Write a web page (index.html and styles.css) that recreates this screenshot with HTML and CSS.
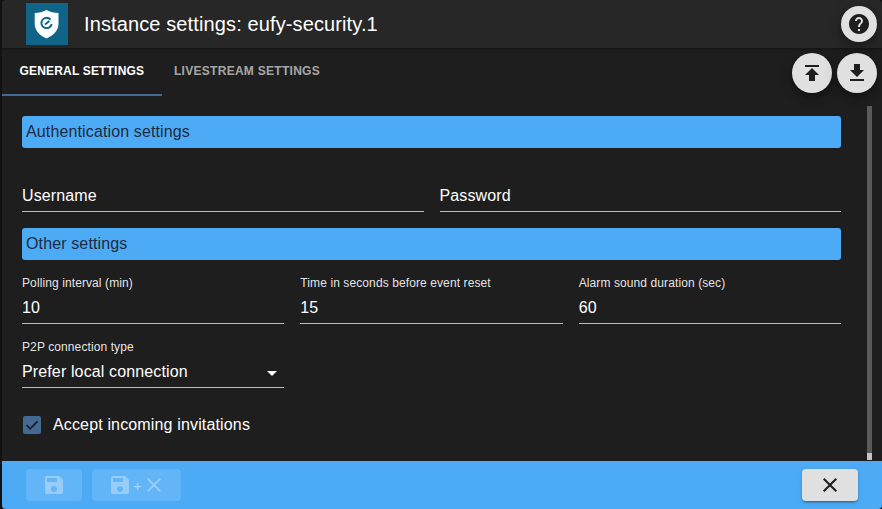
FILE: index.html
```html
<!DOCTYPE html>
<html lang="en">
<head>
<meta charset="utf-8">
<title>Instance settings</title>
<link rel="stylesheet" href="styles.css">
</head>
<body>
<div class="dialog">
  <header class="appbar">
    <div class="logo">
      <svg viewBox="0 0 42 42" width="42" height="42">
        <path d="M20.5 7 C24 9 28 9.8 32.5 10 V20.5 C32.5 28 27 32.5 20.5 35.5 C14 32.5 8.7 28 8.7 20.5 V10 C13 9.8 17 9 20.5 7 Z" fill="#fff"/>
        <path d="M24.6 16.6 A5.2 5.2 0 1 0 25.7 21" fill="none" stroke="#0f6488" stroke-width="1.9"/>
        <path d="M19 21.4 L23.4 18" stroke="#0f6488" stroke-width="1.9"/>
      </svg>
    </div>
    <h1 class="title">Instance settings: eufy-security.1</h1>
    <button class="round round-help" aria-label="Help">
      <svg viewBox="0 0 24 24" width="24" height="24"><path fill="#1e1e1e" d="M12 2C6.48 2 2 6.48 2 12s4.48 10 10 10 10-4.48 10-10S17.52 2 12 2zm1 17h-2v-2h2v2zm2.07-7.75-.9.92C13.45 12.9 13 13.5 13 15h-2v-.5c0-1.1.45-2.1 1.17-2.83l1.24-1.26c.37-.36.59-.86.59-1.41 0-1.1-.9-2-2-2s-2 .9-2 2H8c0-2.21 1.79-4 4-4s4 1.79 4 4c0 .88-.36 1.68-.93 2.25z"/></svg>
    </button>
  </header>
  <nav class="tabs">
    <div class="tab tab-active">General settings</div>
    <div class="tab">Livestream settings</div>
    <div class="tab-actions">
      <button class="round" aria-label="Upload">
        <svg viewBox="0 0 24 24" width="24" height="24"><path fill="#1e1e1e" d="M5 4v2h14V4H5zm0 10h4v6h6v-6h4l-7-7-7 7z"/></svg>
      </button>
      <button class="round" aria-label="Download">
        <svg viewBox="0 0 24 24" width="24" height="24"><path fill="#1e1e1e" d="M19 9h-4V3H9v6H5l7 7 7-7zM5 18v2h14v-2H5z"/></svg>
      </button>
    </div>
  </nav>
  <main class="content">
    <form class="form">
      <div class="section">Authentication settings</div>
      <div class="row row-auth">
        <div class="field field-plain"><span class="value">Username</span></div>
        <div class="field field-plain"><span class="value">Password</span></div>
      </div>
      <div class="section section-other">Other settings</div>
      <div class="row row-three">
        <div class="field"><label class="label">Polling interval (min)</label><span class="value">10</span></div>
        <div class="field"><label class="label">Time in seconds before event reset</label><span class="value">15</span></div>
        <div class="field"><label class="label">Alarm sound duration (sec)</label><span class="value">60</span></div>
      </div>
      <div class="row row-three row-select">
        <div class="field">
          <label class="label">P2P connection type</label>
          <span class="value value-select">Prefer local connection<i class="caret"></i></span>
        </div>
      </div>
      <div class="check-row">
        <span class="checkbox">
          <svg viewBox="0 0 18 18" width="18" height="18"><path d="M3.6 9.2 L7.2 12.8 L14.4 5.4" fill="none" stroke="#1e1e1e" stroke-width="1.8"/></svg>
        </span>
        <span class="check-label">Accept incoming invitations</span>
      </div>
    </form>
    <div class="scrollbar"><div class="scroll-end"></div></div>
  </main>
  <footer class="footer">
    <button class="btn btn-disabled btn-save" aria-label="Save">
      <svg viewBox="0 0 24 24" width="24" height="24"><path fill="#98cdf8" d="M17 3H5c-1.11 0-2 .9-2 2v14c0 1.1.89 2 2 2h14c1.1 0 2-.9 2-2V7l-4-4zm-5 16c-1.66 0-3-1.34-3-3s1.34-3 3-3 3 1.34 3 3-1.34 3-3 3zm3-10H5V5h10v4z"/></svg>
    </button>
    <button class="btn btn-disabled btn-save-close" aria-label="Save and close">
      <svg viewBox="0 0 24 24" width="24" height="24"><path fill="#98cdf8" d="M17 3H5c-1.11 0-2 .9-2 2v14c0 1.1.89 2 2 2h14c1.1 0 2-.9 2-2V7l-4-4zm-5 16c-1.66 0-3-1.34-3-3s1.34-3 3-3 3 1.34 3 3-1.34 3-3 3zm3-10H5V5h10v4z"/></svg>
      <span class="plus">+</span>
      <svg viewBox="0 0 24 24" width="24" height="24"><path fill="#98cdf8" d="M19 6.41 17.59 5 12 10.59 6.41 5 5 6.41 10.59 12 5 17.59 6.41 19 12 13.41 17.59 19 19 17.59 13.41 12z"/></svg>
    </button>
    <button class="btn btn-close" aria-label="Close">
      <svg viewBox="0 0 24 24" width="24" height="24"><path fill="#1e1e1e" d="M19 6.41 17.59 5 12 10.59 6.41 5 5 6.41 10.59 12 5 17.59 6.41 19 12 13.41 17.59 19 19 17.59 13.41 12z"/></svg>
    </button>
  </footer>
</div>
</body>
</html>
```

FILE: styles.css
```css
* { box-sizing: border-box; }
html, body { margin: 0; height: 100%; background: #121212; overflow: hidden; }
body { font-family: "Liberation Sans", Arial, sans-serif; color: #fff; }
.dialog {
  margin-left: 2px;
  height: 509px;
  display: flex;
  flex-direction: column;
  background: #1e1e1e;
  border-radius: 4px;
  overflow: hidden;
}
.appbar {
  height: 48px;
  flex: none;
  display: flex;
  align-items: center;
  background: #272727;
  box-shadow: 0 1px 3px rgba(0,0,0,.35);
  position: relative;
  padding: 3px 5px 3px 24px;
}
.logo { width: 42px; height: 42px; background: #0f6488; }
.logo svg { display: block; }
.title { margin: 0 0 0 16px; font-size: 20px; font-weight: 400; line-height: 32px; letter-spacing: .12px; flex: 1; white-space: nowrap; }
.round {
  width: 40px; height: 40px; border: 0; padding: 0; border-radius: 50%;
  background: #e0e0e0; display: flex; align-items: center; justify-content: center;
  box-shadow: 0 3px 5px -1px rgba(0,0,0,.2), 0 6px 10px 0 rgba(0,0,0,.14), 0 1px 18px 0 rgba(0,0,0,.12);
}
.round-help { width: 36px; height: 36px; }
.tabs { height: 48px; flex: none; display: flex; }
.tab {
  height: 48px; padding: 0 12px; display: flex; align-items: center;
  font-size: 12px; font-weight: 700; text-transform: uppercase; letter-spacing: .28px;
  color: rgba(255,255,255,.62); border-bottom: 2px solid transparent; white-space: nowrap;
  padding-bottom: 1px;
}
.tab-active { color: #fff; border-bottom-color: #436a93; width: 160px; padding-left: 17.5px; letter-spacing: .18px; }
.tab-actions { margin-left: auto; display: flex; gap: 5px; padding: 5px 5px 0 0; }
.content { flex: 1; min-height: 0; display: flex; padding: 20px 0 0 20px; position: relative; }
.form { width: 819px; flex: none; }
.section {
  height: 32px; background: #4dabf5; border-radius: 3px;
  font-size: 16px; line-height: 32px; padding-left: 4px; letter-spacing: .13px;
  color: #1e2a40;
}
.section-other { margin-top: 16px; }
.row { display: grid; gap: 16px; }
.row-auth { grid-template-columns: 1fr 1fr; margin-top: 32px; }
.row-three { grid-template-columns: 1fr 1fr 1fr; margin-top: 16px; }
.row-select { margin-top: 16px; }
.field { border-bottom: 1px solid rgba(255,255,255,.7); }
.field-plain { height: 32px; }
.label { display: block; font-size: 12px; line-height: 14px; letter-spacing: .1px; color: rgba(255,255,255,.9); font-weight: 400; }
.value { display: block; font-size: 16px; line-height: 19px; padding: 8px 0 6px; letter-spacing: .13px; color: #fff; white-space: nowrap; }
.field-plain .value { padding: 0; line-height: 31px; }
.value-select { display: flex; align-items: center; justify-content: space-between; padding: 8px 0 6px; }
.caret { width: 0; height: 0; border: 5px solid transparent; border-top-color: #fff; border-bottom: 0; margin-right: 7px; margin-top: 3px; }
.check-row { display: flex; align-items: center; margin-top: 27px; padding-left: 1px; }
.checkbox { width: 18px; height: 18px; border-radius: 2px; background: #436a93; display: block; }
.checkbox svg { display: block; }
.check-label { margin-left: 12px; font-size: 16px; line-height: 20px; letter-spacing: .15px; }
.scrollbar {
  position: absolute; left: 865px; top: 10px; bottom: 1px; width: 5px; background: #5a5a5a;
}
.scroll-end { position: absolute; left: 0; right: 0; bottom: 0; height: 7px; background: #c1c4c9; }
.footer {
  height: 48px; flex: none; background: #4dabf5; display: flex; align-items: center;
  padding: 0 24px; gap: 10px;
}
.btn { height: 32px; border: 0; border-radius: 4px; padding: 0; display: flex; align-items: center; justify-content: center; }
.btn-disabled { background: rgba(255,255,255,.12); }
.btn-save { width: 56px; }
.btn-save-close { width: 89px; padding-left: 1px; }
.plus { color: #a8d5f9; font-size: 15px; margin: 0 0 0 1px; }
.btn-close {
  width: 56px; margin-left: auto; background: #e0e0e0;
  box-shadow: 0 3px 1px -2px rgba(0,0,0,.2), 0 2px 2px 0 rgba(0,0,0,.14), 0 1px 5px 0 rgba(0,0,0,.12);
}
```
